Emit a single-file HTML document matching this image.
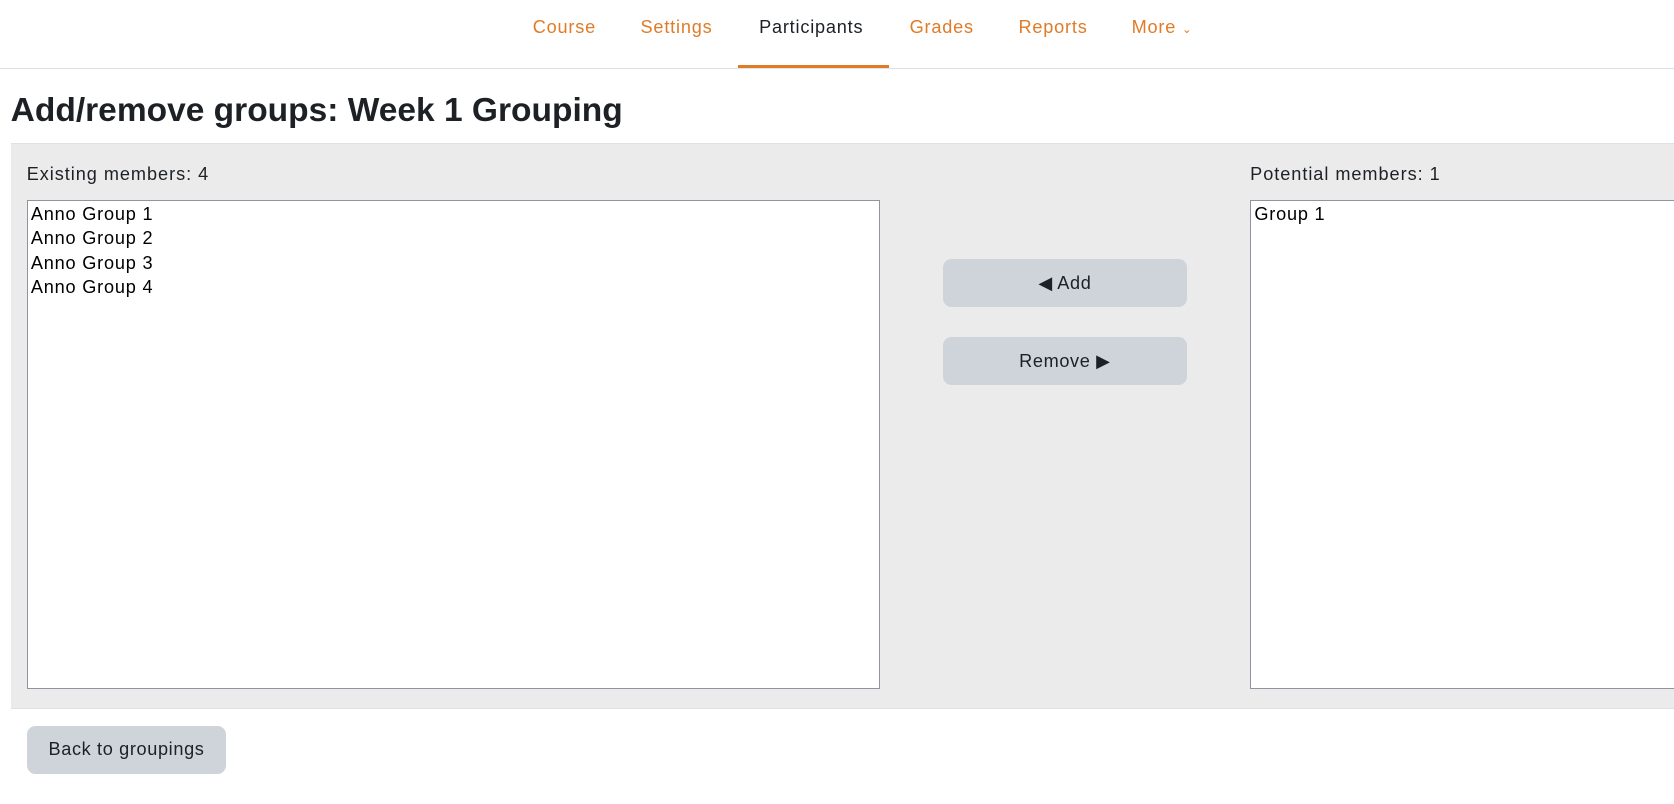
<!DOCTYPE html>
<html><head><meta charset="utf-8"><style>
html,body{margin:0;padding:0;background:#fff;overflow:hidden}
body{width:1674px;height:804px}
#w{zoom:1.0676;width:1568px;height:753px;position:relative;font-family:"Liberation Sans",sans-serif;color:#1d2125}
.a{position:absolute}
.nav{font-size:17px;letter-spacing:0.75px;top:16px;color:#e07b28;white-space:nowrap}
.btn{position:absolute;background:#ced4da;border-radius:8px;font-size:17px;letter-spacing:0.6px;display:flex;align-items:center;justify-content:center;color:#1d2125}
.box{position:absolute;background:#fff;border:1px solid #8f959e;font-size:17px;letter-spacing:0.75px;color:#000;box-sizing:border-box;padding:1px 3px;line-height:23px}
.lbl{font-size:17px;letter-spacing:0.9px;top:154px;white-space:nowrap}
</style></head><body><div id="w">
<div class="a nav" style="left:499px">Course</div>
<div class="a nav" style="left:600px">Settings</div>
<div class="a nav" style="left:711px;color:#1d2125">Participants</div>
<div class="a nav" style="left:852px">Grades</div>
<div class="a nav" style="left:954px">Reports</div>
<div class="a nav" style="left:1060px">More <span style="font-size:11px">&#8964;</span></div>
<div class="a" style="left:0;top:64px;width:1568px;height:1px;background:#dee2e6"></div>
<div class="a" style="left:691px;top:61px;width:142px;height:3px;background:#e07b28"></div>
<div class="a" style="left:10px;top:86px;font-size:31.4px;font-weight:bold;white-space:nowrap">Add/remove groups: Week 1 Grouping</div>
<div class="a" style="left:10px;top:134px;width:1558px;height:530px;background:#ebebeb;border-top:1px solid #dee2e6;border-bottom:1px solid #dee2e6;box-sizing:border-box"></div>
<div class="a lbl" style="left:25px">Existing members: 4</div>
<div class="a lbl" style="left:1171px">Potential members: 1</div>
<div class="box" style="left:25px;top:187px;width:799px;height:458px">Anno Group 1<br>Anno Group 2<br>Anno Group 3<br>Anno Group 4</div>
<div class="box" style="left:1171px;top:187px;width:420px;height:458px">Group 1</div>
<div class="btn" style="left:883px;top:243px;width:229px;height:45px">&#9664;&#8201;Add</div>
<div class="btn" style="left:883px;top:316px;width:229px;height:45px">Remove &#9654;</div>
<div class="btn" style="left:25px;top:680px;width:187px;height:45px">Back to groupings</div>
</div></body></html>
